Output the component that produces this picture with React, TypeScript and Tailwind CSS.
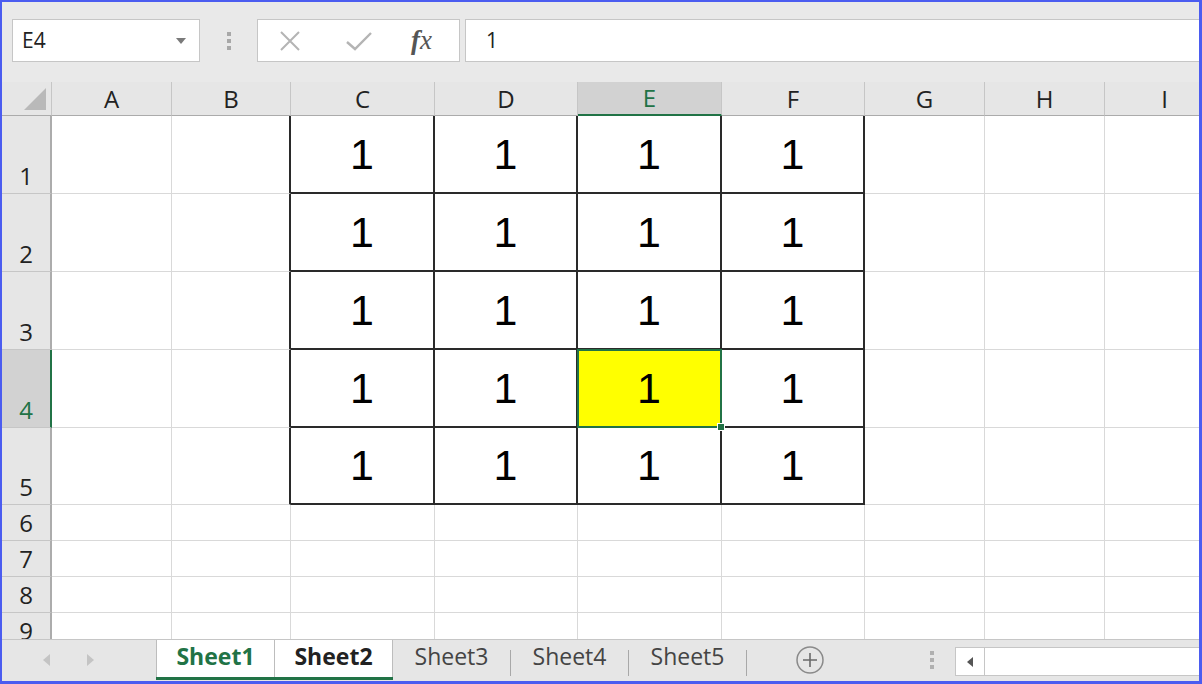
import React from "react";

const COLS = ["A", "B", "C", "D", "E", "F", "G", "H", "I"];
const ROWS = [1, 2, 3, 4, 5, 6, 7, 8, 9];

function Cell({ r, c }: { r: number; c: number }) {
  // c: 0..8 => A..I
  const inTable = r <= 5 && c >= 2 && c <= 5;
  const leftOfTable = r <= 5 && c === 1;
  const selected = r === 4 && c === 4;
  let cls = "relative flex items-center justify-center ";
  if (inTable) {
    cls += "border-r-2 border-b-2 border-[#2a2a2a] ";
  } else if (leftOfTable) {
    cls += "border-r-2 border-b border-r-[#2a2a2a] border-b-[#d9d9d9] ";
  } else {
    cls += "border-r border-b border-[#d9d9d9] ";
  }
  cls += selected ? "bg-[#ffff00] z-10 " : "bg-white ";
  return (
    <div className={cls}>
      {inTable && (
        <span className="font-['Liberation_Sans',Arial,sans-serif] text-[43px] leading-none text-black">1</span>
      )}
      {selected && (
        <>
          <div className="absolute -left-[1px] -top-[1px] -right-[2px] -bottom-[2px] border-2 border-[#217346]" />
          <div className="absolute -right-[5px] -bottom-[5px] w-[8px] h-[8px] bg-[#217346] border border-white" />
        </>
      )}
    </div>
  );
}

export default function App() {
  return (
    <div className="w-[1202px] h-[684px] border-l-2 border-t-2 border-r-[3px] border-b-[3px] border-[#4b5cf0] bg-[#e6e6e6] flex flex-col overflow-hidden font-['Open_Sans',sans-serif]">
      {/* Formula bar */}
      <div className="h-[80px] shrink-0 flex items-start pt-[17px] bg-[#e9e9e9]">
        <div className="ml-[10px] w-[188px] h-[43px] bg-white border border-[#c6c6c6] flex items-center justify-between pl-[9px] pr-[13px]">
          <span className="text-[21px] text-[#222] leading-none">E4</span>
          <svg width="10" height="6" viewBox="0 0 10 6"><path d="M0 0 L10 0 L5 6 Z" fill="#7a7a7a" /></svg>
        </div>
        <div className="w-[57px] h-[43px] flex flex-col items-center justify-center gap-[3px]">
          <div className="w-[4px] h-[4px] bg-[#a8a8a8]" />
          <div className="w-[4px] h-[4px] bg-[#a8a8a8]" />
          <div className="w-[4px] h-[4px] bg-[#a8a8a8]" />
        </div>
        <div className="w-[203px] h-[43px] bg-white border border-[#c6c6c6] flex items-center">
          <svg className="ml-[20px]" width="24" height="20" viewBox="0 0 24 20">
            <path d="M3 1 L21 19 M21 1 L3 19" stroke="#b4b4b4" strokeWidth="2" fill="none" />
          </svg>
          <svg className="ml-[43px]" width="28" height="20" viewBox="0 0 28 20">
            <path d="M2 11 L10 18 L26 2" stroke="#b4b4b4" strokeWidth="2.4" fill="none" />
          </svg>
          <span className="ml-[38px] font-['Liberation_Serif',serif] italic text-[27px] leading-none text-[#555]">
            <span className="font-bold">f</span>x
          </span>
        </div>
        <div className="ml-[5px] flex-1 h-[43px] bg-white border-l border-t border-b border-[#c6c6c6] flex items-center pl-[20px]">
          <span className="text-[21px] text-[#222] leading-none">1</span>
        </div>
      </div>

      {/* Sheet grid */}
      <div className="flex-1 overflow-hidden bg-white">
        <div className="grid grid-cols-[50px_120px_119px_144px_143px_144px_143px_120px_120px_120px] grid-rows-[34px_78px_78px_78px_78px_77px_36px_36px_36px_36px]">
          {/* corner */}
          <div className="relative bg-[#e6e6e6] border-r border-b border-r-[#c6c6c6] border-b-[#ababab]">
            <svg className="absolute left-0 top-0" width="50" height="34" viewBox="0 0 50 34">
              <path d="M44 6 L44 28 L22 28 Z" fill="#b9b9b9" />
            </svg>
          </div>
          {COLS.map((c) =>
            c === "E" ? (
              <div key={c} className="bg-[#d2d2d2] border-r border-r-[#c6c6c6] border-b-2 border-b-[#217346] flex items-center justify-center text-[24px] leading-none text-[#217346]">
                {c}
              </div>
            ) : (
              <div key={c} className="bg-[#e6e6e6] border-r border-b border-r-[#c6c6c6] border-b-[#ababab] flex items-center justify-center text-[24px] leading-none text-[#222]">
                {c}
              </div>
            )
          )}
          {ROWS.map((r) => (
            <React.Fragment key={r}>
              {r === 4 ? (
                <div className="bg-[#d2d2d2] border-b border-b-[#c6c6c6] border-r-2 border-r-[#217346] flex items-end justify-center pb-[5px] text-[24px] leading-none text-[#217346]">
                  {r}
                </div>
              ) : (
                <div className="bg-[#e6e6e6] border-b border-b-[#c6c6c6] border-r-2 border-r-[#acacac] flex items-end justify-center pb-[5px] text-[24px] leading-none text-[#222]">
                  {r}
                </div>
              )}
              {COLS.map((_, ci) => (
                <Cell key={ci} r={r} c={ci} />
              ))}
            </React.Fragment>
          ))}
        </div>
      </div>

      {/* Tab bar */}
      <div className="h-[42px] shrink-0 bg-[#e6e6e6] border-t border-[#c6c6c6] flex items-start">
        <div className="w-[154px] h-[40px] flex items-center">
          <svg className="ml-[41px]" width="8" height="12" viewBox="0 0 8 12"><path d="M7 0 L7 12 L0 6 Z" fill="#c4c4c4" /></svg>
          <svg className="ml-[35px]" width="8" height="12" viewBox="0 0 8 12"><path d="M1 0 L1 12 L8 6 Z" fill="#c4c4c4" /></svg>
        </div>
        <div className="flex flex-col">
          <div className="flex h-[37px]">
            <div className="w-[118px] bg-white border-l border-[#bdbdbd] flex items-center justify-center pb-[5px] text-[23px] font-bold text-[#217346] leading-none">
              Sheet1
            </div>
            <div className="w-[119px] bg-white border-l border-r border-[#bdbdbd] flex items-center justify-center pb-[5px] text-[23px] font-bold text-[#222] leading-none">
              Sheet2
            </div>
          </div>
          <div className="h-[3px] bg-[#217346]" />
        </div>
        {["Sheet3", "Sheet4", "Sheet5"].map((s) => (
          <div key={s} className="w-[118px] h-[37px] flex items-center">
            <div className="flex-1 flex items-center justify-center pb-[5px] text-[23px] text-[#444] leading-none">{s}</div>
            <div className="w-px h-[26px] bg-[#a8a8a8] mt-[8px]" />
          </div>
        ))}
        <div className="h-[40px] flex items-center ml-[49px]">
          <svg width="28" height="28" viewBox="0 0 28 28">
            <circle cx="14" cy="14" r="13" stroke="#8a8a8a" strokeWidth="1.5" fill="none" />
            <path d="M14 7 L14 21 M7 14 L21 14" stroke="#6a6a6a" strokeWidth="1.6" />
          </svg>
        </div>
        <div className="h-[40px] flex flex-col items-center justify-center gap-[3px] ml-[106px]">
          <div className="w-[4px] h-[4px] bg-[#b0b0b0]" />
          <div className="w-[4px] h-[4px] bg-[#b0b0b0]" />
          <div className="w-[4px] h-[4px] bg-[#b0b0b0]" />
        </div>
        <div className="ml-[21px] mt-[7px] flex-1 h-[29px] bg-white border-l border-t border-b border-[#c6c6c6] flex">
          <div className="w-[29px] border-r border-[#c6c6c6] flex items-center justify-center">
            <svg width="6" height="10" viewBox="0 0 6 10"><path d="M6 0 L6 10 L0 5 Z" fill="#555" /></svg>
          </div>
        </div>
      </div>
    </div>
  );
}
